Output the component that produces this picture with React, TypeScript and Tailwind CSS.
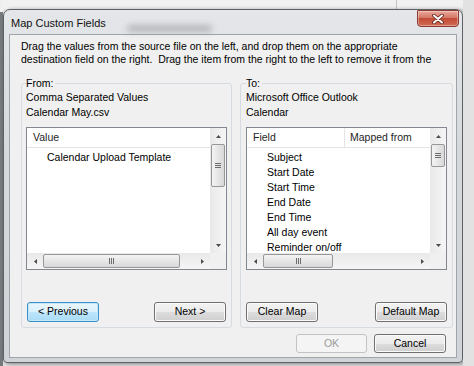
import type { ReactNode } from "react";

type Dir = "up" | "down" | "left" | "right";

function Arrow({ dir }: { dir: Dir }) {
  const vertical = dir === "up" || dir === "down";
  const w = vertical ? 5 : 3;
  const h = vertical ? 3 : 5;
  const pts = {
    up: "0,3 2.5,0 5,3",
    down: "0,0 5,0 2.5,3",
    left: "3,0 3,5 0,2.5",
    right: "0,0 3,2.5 0,5",
  }[dir];
  return (
    <svg width={w} height={h} viewBox={`0 0 ${w} ${h}`}>
      <polygon points={pts} fill="#4a4a4a" />
    </svg>
  );
}

function VScroll({ thumb }: { thumb: string }) {
  return (
    <div className="flex w-[16px] shrink-0 flex-col bg-[linear-gradient(to_right,#e9e9e9,#f5f5f5)]">
      <div className="flex h-[16px] items-center justify-center">
        <Arrow dir="up" />
      </div>
      <div
        className={`mx-[1px] flex flex-col items-center justify-center gap-[1px] rounded-[2px] border border-[#979797] bg-[linear-gradient(to_right,#f3f3f3,#e6e6e6_50%,#d8d8d8)] ${thumb}`}
      >
        <div className="h-[1px] w-[6px] bg-[#6c6c6c]" />
        <div className="h-[1px] w-[6px] bg-[#6c6c6c]" />
        <div className="h-[1px] w-[6px] bg-[#6c6c6c]" />
      </div>
      <div className="flex-1" />
      <div className="flex h-[16px] items-center justify-center">
        <Arrow dir="down" />
      </div>
    </div>
  );
}

function HScroll({ thumb }: { thumb: string }) {
  return (
    <div className="flex flex-1 bg-[linear-gradient(#e9e9e9,#f5f5f5)]">
      <div className="flex w-[16px] items-center justify-center">
        <Arrow dir="left" />
      </div>
      <div
        className={`my-[1px] flex items-center justify-center gap-[1px] rounded-[2px] border border-[#979797] bg-[linear-gradient(#f3f3f3,#e6e6e6_50%,#d8d8d8)] ${thumb}`}
      >
        <div className="h-[6px] w-[1px] bg-[#6c6c6c]" />
        <div className="h-[6px] w-[1px] bg-[#6c6c6c]" />
        <div className="h-[6px] w-[1px] bg-[#6c6c6c]" />
      </div>
      <div className="flex-1" />
      <div className="flex w-[16px] items-center justify-center">
        <Arrow dir="right" />
      </div>
    </div>
  );
}

function ListBox({
  header,
  rows,
  vThumb,
  hThumb,
}: {
  header: ReactNode;
  rows: string[];
  vThumb: string;
  hThumb: string;
}) {
  return (
    <div className="mt-[7px] flex h-[143px] flex-col border border-[#828790] bg-white">
      <div className="flex min-h-0 flex-1">
        <div className="min-w-0 flex-1 overflow-hidden">
          <div className="flex h-[20px] items-stretch border-b border-[#e5e5e5] text-[#1e1e1e]">
            {header}
          </div>
          <div className="pt-[2px] pl-[20px] leading-[15px]">
            {rows.map((r) => (
              <div key={r} className="whitespace-nowrap">
                {r}
              </div>
            ))}
          </div>
        </div>
        <VScroll thumb={vThumb} />
      </div>
      <div className="flex h-[16px]">
        <HScroll thumb={hThumb} />
        <div className="w-[16px] bg-[#f0f0f0]" />
      </div>
    </div>
  );
}

function Btn({
  children,
  kind = "normal",
  className = "",
}: {
  children: ReactNode;
  kind?: "normal" | "default" | "disabled";
  className?: string;
}) {
  const look =
    kind === "default"
      ? "border-[#3c8fc8] bg-[linear-gradient(#eaf6fd,#d9f0fc_50%,#bee6fd_50%,#a9dbf6)] shadow-[inset_0_0_0_1px_#c4e8fb] text-black"
      : kind === "disabled"
        ? "border-[#c0c4c7] bg-[#f4f4f4] text-[#9a9a9a]"
        : "border-[#707070] bg-[linear-gradient(#f2f2f2,#ebebeb_50%,#dddddd_50%,#cfcfcf)] shadow-[inset_0_0_0_1px_#fbfbfb] text-black";
  return (
    <div
      className={`flex items-center justify-center rounded-[3px] border ${look} ${className}`}
    >
      {children}
    </div>
  );
}

function Group({
  label,
  lines,
  width,
  pad,
  children,
}: {
  label: string;
  lines: string[];
  width: string;
  pad: string;
  children: ReactNode;
}) {
  return (
    <fieldset
      className={`m-0 rounded-[3px] border border-[#d5dbe0] pb-[5px] ${pad} ${width}`}
    >
      <legend className="p-0 pr-[2px] leading-[14px]">{label}</legend>
      <div className="leading-[15px]">
        {lines.map((l) => (
          <div key={l} className="whitespace-nowrap">
            {l}
          </div>
        ))}
      </div>
      {children}
    </fieldset>
  );
}

export default function App() {
  return (
    <div className="flex h-[366px] w-[474px] overflow-hidden bg-[#e6e6e6] font-['Liberation_Sans',Arial,sans-serif] text-[10.5px] text-black">
      {/* window behind */}
      <div className="flex w-[3px] flex-col">
        <div className="h-[12px] bg-[#efefef]" />
        <div className="flex-1 bg-[#777a7d]" />
      </div>

      <div className="flex flex-col">
        <div className="flex h-[9px] bg-[#f1f1f1]">
          <div className="w-[393px]" />
          <div className="w-[1px] bg-[#c4c4c4]" />
        </div>

        {/* dialog */}
        <div className="flex h-[354px] w-[460px] flex-col rounded-t-[7px] rounded-b-[4px] border border-[#5d6166] bg-[linear-gradient(#e4e6e9,#d6d9dc_40%,#d0d3d7)] px-[5px] pb-[4px] shadow-[2px_1px_4px_rgba(0,0,0,0.45)]">
          <div className="relative flex h-[24px] items-start">
            <div className="absolute left-[118px] top-[15px] h-[7px] w-[85px] rounded-full bg-[#7d8084] opacity-45 blur-[3px]" />
            <div className="relative mt-[6px] pl-[2px] text-[11px] leading-[14px] text-[#111]">
              Map Custom Fields
            </div>
            <div className="flex-1" />
            <div className="mr-[-2px] flex h-[17px] w-[42px] items-center justify-center rounded-b-[4px] rounded-t-[1px] border border-[#8a3a2f] bg-[linear-gradient(#e9a99b,#d47766_45%,#c24c36_50%,#cf6a55)] shadow-[inset_0_0_0_1px_rgba(255,255,255,0.35)]">
              <svg width="12" height="10" viewBox="0 0 12 10">
                <path
                  d="M2 1.5 L10 8.5 M10 1.5 L2 8.5"
                  stroke="#5a2018"
                  strokeWidth="3.6"
                  strokeLinecap="round"
                />
                <path
                  d="M2 1.5 L10 8.5 M10 1.5 L2 8.5"
                  stroke="#ffffff"
                  strokeWidth="2"
                  strokeLinecap="round"
                />
              </svg>
            </div>
          </div>

          {/* client area */}
          <div className="flex h-[324px] flex-col border border-[#9ea4aa] bg-[#f0f0f0] pt-[5px] pb-[4px]">
            <div className="overflow-hidden pl-[11px] pr-[6px] leading-[13px]">
              <div className="whitespace-nowrap">
                Drag the values from the source file on the left, and drop them on the appropriate
              </div>
              <div className="whitespace-nowrap">
                destination field on the right.&nbsp; Drag the item from the right to the left to remove it from the
              </div>
            </div>

            <div className="mt-[10px] flex gap-[8px] pl-[11px]">
              <Group
                label="From:"
                lines={["Comma Separated Values", "Calendar May.csv"]}
                width="w-[211px]"
                pad="px-[4px]"
              >
                <ListBox
                  header={<div className="flex items-center pl-[6px]">Value</div>}
                  rows={["Calendar Upload Template"]}
                  vThumb="h-[43px]"
                  hThumb="w-[137px]"
                />
                <div className="mt-[32px] flex justify-between px-[1px]">
                  <Btn kind="default" className="h-[20px] w-[72px]">
                    &lt; Previous
                  </Btn>
                  <Btn className="h-[20px] w-[72px]">Next &gt;</Btn>
                </div>
              </Group>

              <Group
                label="To:"
                lines={["Microsoft Office Outlook", "Calendar"]}
                width="w-[213px]"
                pad="px-[5px]"
              >
                <ListBox
                  header={
                    <>
                      <div className="flex w-[98px] items-center border-r border-[#e5e5e5] pl-[6px]">
                        Field
                      </div>
                      <div className="flex items-center whitespace-nowrap pl-[5px]">
                        Mapped from
                      </div>
                    </>
                  }
                  rows={[
                    "Subject",
                    "Start Date",
                    "Start Time",
                    "End Date",
                    "End Time",
                    "All day event",
                    "Reminder on/off",
                  ]}
                  vThumb="h-[23px]"
                  hThumb="w-[70px]"
                />
                <div className="mt-[32px] flex justify-between">
                  <Btn className="h-[20px] w-[72px]">Clear Map</Btn>
                  <Btn className="h-[20px] w-[72px]">Default Map</Btn>
                </div>
              </Group>
            </div>

            <div className="mt-[6px] flex justify-end gap-[7px] pr-[10px]">
              <Btn kind="disabled" className="h-[19px] w-[71px]">
                OK
              </Btn>
              <Btn className="h-[19px] w-[72px]">Cancel</Btn>
            </div>
          </div>
        </div>
      </div>

      <div className="flex-1 bg-[#e2e2e2]" />
    </div>
  );
}
